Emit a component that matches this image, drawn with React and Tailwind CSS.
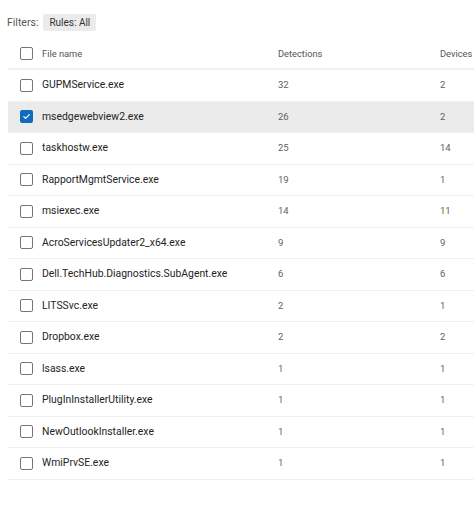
import React from 'react';

const rows = [
  { name: 'GUPMService.exe', detections: 32, devices: 2 },
  { name: 'msedgewebview2.exe', detections: 26, devices: 2, selected: true },
  { name: 'taskhostw.exe', detections: 25, devices: 14 },
  { name: 'RapportMgmtService.exe', detections: 19, devices: 1 },
  { name: 'msiexec.exe', detections: 14, devices: 11 },
  { name: 'AcroServicesUpdater2_x64.exe', detections: 9, devices: 9 },
  { name: 'Dell.TechHub.Diagnostics.SubAgent.exe', detections: 6, devices: 6 },
  { name: 'LITSSvc.exe', detections: 2, devices: 1 },
  { name: 'Dropbox.exe', detections: 2, devices: 2 },
  { name: 'lsass.exe', detections: 1, devices: 1 },
  { name: 'PlugInInstallerUtility.exe', detections: 1, devices: 1 },
  { name: 'NewOutlookInstaller.exe', detections: 1, devices: 1 },
  { name: 'WmiPrvSE.exe', detections: 1, devices: 1 },
];

const Checkbox = ({ checked }) =>
  checked ? (
    <span className="flex h-[13px] w-[13px] items-center justify-center rounded-[2px] bg-[#0f6cbd]">
      <svg width="9" height="9" viewBox="0 0 9 9" fill="none">
        <path d="M1.8 4.6 3.7 6.4 7.3 2.6" stroke="white" strokeWidth="1.2" strokeLinecap="round" strokeLinejoin="round" />
      </svg>
    </span>
  ) : (
    <span className="block h-[13px] w-[13px] rounded-[2px] border border-[#757575] bg-white" />
  );

export default function App() {
  return (
    <div className="h-[526px] w-[474px] overflow-hidden bg-white" style={{ fontFamily: 'Roboto, "Noto Sans", sans-serif' }}>
      <div className="flex items-center gap-[5px] pl-[7px] pt-[14px]">
        <span className="text-[10.5px] text-[#555]">Filters:</span>
        <span className="flex h-[17px] items-center rounded-[2px] bg-[#ebebeb] px-[6px] text-[10px] text-[#333]">Rules: All</span>
      </div>

      <div className="ml-[8px] mt-[5px]">
        <div className="flex h-[34px] items-center border-b-2 border-[#f0f0f0] pt-[3px] text-[9.3px] text-[#555]">
          <div className="flex w-[34px] justify-center pl-[3px]">
            <Checkbox />
          </div>
          <div className="w-[236px]">File name</div>
          <div className="w-[162px]">Detections</div>
          <div>Devices</div>
        </div>
        {rows.map((r) => (
          <div
            key={r.name}
            className={`flex h-[31.5px] items-center border-b border-[#f0f0f0] ${r.selected ? 'bg-[#ebebeb]' : ''}`}
          >
            <div className="flex w-[34px] justify-center pl-[3px]">
              <Checkbox checked={r.selected} />
            </div>
            <div className="w-[236px] text-[10.4px] text-[#242424]">{r.name}</div>
            <div className="w-[162px] text-[9.5px] text-[#616161]">{r.detections}</div>
            <div className="text-[9.5px] text-[#616161]">{r.devices}</div>
          </div>
        ))}
      </div>
    </div>
  );
}
